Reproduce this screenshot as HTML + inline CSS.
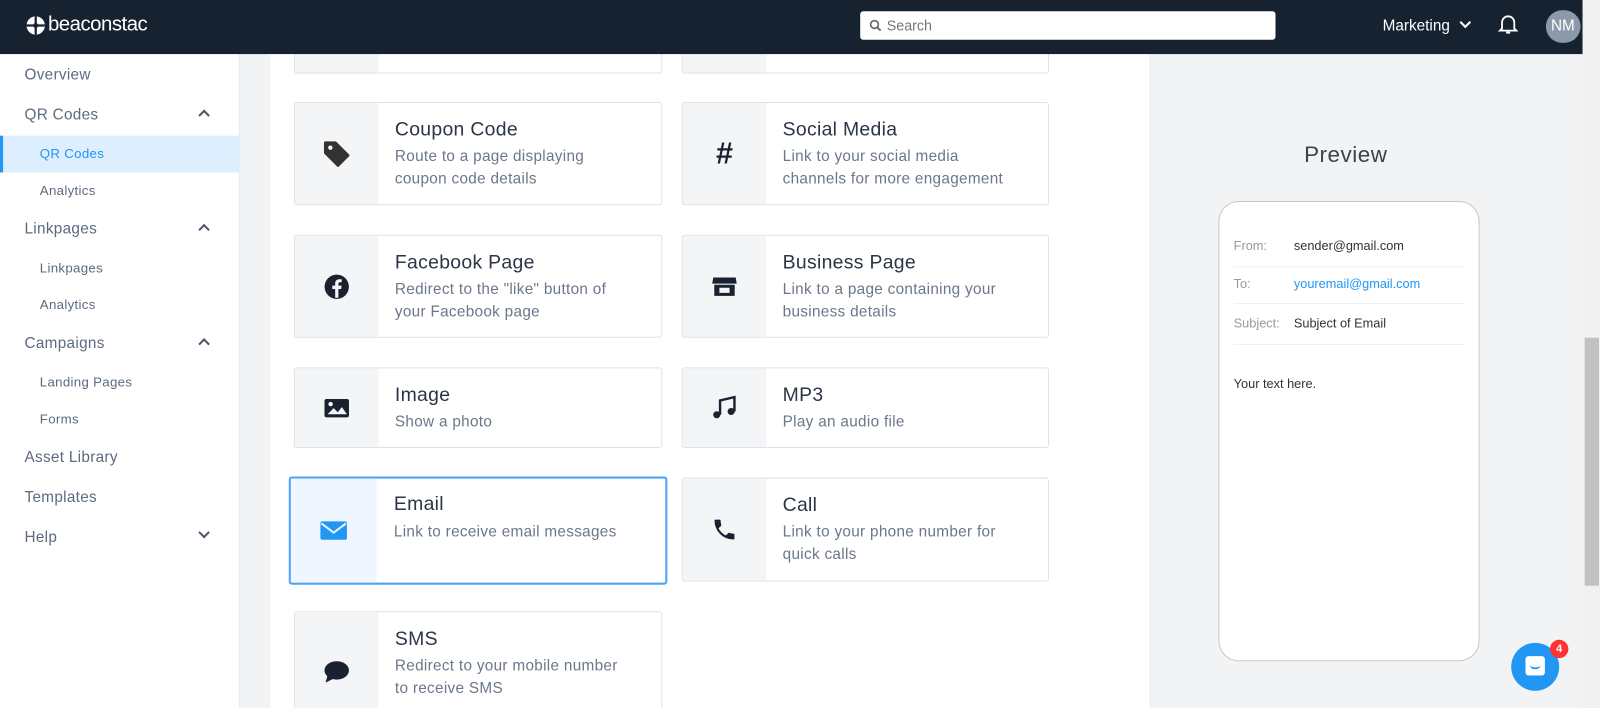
<!DOCTYPE html>
<html><head><style>
*{box-sizing:border-box;margin:0;padding:0}
html,body{width:1600px;height:708px;overflow:hidden}
body{font-family:"Liberation Sans",sans-serif;background:#fff;position:relative}
#w{position:absolute;left:0;top:0;width:1568px;height:694px;transform:scale(1.0204);transform-origin:0 0}
.hdr{position:absolute;left:0;top:0;width:1551px;height:53px;background:#172231;z-index:10}
.side{position:absolute;left:0;top:53px;width:235px;height:655px;background:#fff;border-right:1px solid #e6e8eb}
.strip{position:absolute;left:235px;top:53px;width:30px;height:655px;background:#f2f3f5}
.prev{position:absolute;left:1126px;top:53px;width:425px;height:655px;background:#f2f3f5}
.sb{position:absolute;left:1551px;top:0;width:17px;height:708px;background:#f1f1f1;z-index:11}
.nav{position:absolute;left:24px;font-size:15px;color:#5c6a7e;letter-spacing:0.3px}
.sub{position:absolute;left:39px;font-size:13px;color:#5c6a7e;letter-spacing:0.3px}
.chev{position:absolute;left:196px;width:8px;height:8px;border-left:2.5px solid #4a5768;border-top:2.5px solid #4a5768;transform:rotate(45deg)}
.card{position:absolute;border:1px solid #dfe2e6;border-radius:3px;background:#fff;overflow:hidden}
.card .ic{position:absolute;left:0;top:0;bottom:0;width:82px;background:#f4f5f7;display:flex;align-items:center;justify-content:center}
.card .t{position:absolute;left:98px;top:16px;font-size:19px;color:#2b3545;letter-spacing:0.3px}
.card .d{position:absolute;left:98px;top:42px;font-size:15px;color:#6b778a;line-height:22px;white-space:nowrap;letter-spacing:0.3px}
</style></head><body><div id="w">
<div class="hdr">
  <svg style="position:absolute;left:25px;top:15px" width="20" height="20" viewBox="0 0 20 20"><circle cx="10" cy="10" r="9" fill="#fff"/><path d="M10 10L10 1M10 10L19 10M10 10L10 19M10 10L1 10" stroke="#172231" stroke-width="2.2"/><circle cx="10" cy="10" r="2.5" fill="#172231"/></svg>
  <div style="position:absolute;left:47px;top:13px;color:#fff;font-size:20px;letter-spacing:-0.5px">beaconstac</div>
  <div style="position:absolute;left:843px;top:11px;width:407px;height:28px;background:#fff;border-radius:3px">
    <svg style="position:absolute;left:9px;top:8px" width="12" height="12" viewBox="0 0 12 12"><circle cx="5" cy="5" r="3.8" stroke="#666" stroke-width="1.6" fill="none"/><path d="M8 8l3 3" stroke="#666" stroke-width="1.8"/></svg>
    <span style="position:absolute;left:26px;top:6px;font-size:14px;color:#777">Search</span>
  </div>
  <div style="position:absolute;left:1355px;top:17px;color:#fff;font-size:15px">Marketing</div>
  <div style="position:absolute;left:1432px;top:18px;width:8px;height:8px;border-right:2.5px solid #fff;border-bottom:2.5px solid #fff;transform:rotate(45deg)"></div>
  <svg style="position:absolute;left:1468px;top:13px" width="20" height="22" viewBox="0 0 20 22"><path d="M4 15V9a6 6 0 0 1 12 0v6l2 2H2z" stroke="#fff" stroke-width="1.8" fill="none"/><path d="M8 19h4" stroke="#fff" stroke-width="2"/></svg>
  <div style="position:absolute;left:1515px;top:10px;width:34px;height:32px;border-radius:16px;background:#8a9aab;color:#fff;font-size:15px;line-height:32px;padding-left:5px">NM</div>
</div>
<div class="side">
  <div class="nav" style="top:12px">Overview</div>
  <div class="nav" style="top:51px">QR Codes</div><div class="chev" style="top:56px"></div>
  <div style="position:absolute;left:0;top:80px;width:235px;height:36px;background:#ddeeff;border-left:3px solid #2196f3"></div>
  <div class="sub" style="top:90px;color:#2196f3">QR Codes</div>
  <div class="sub" style="top:126px">Analytics</div>
  <div class="nav" style="top:163px">Linkpages</div><div class="chev" style="top:168px"></div>
  <div class="sub" style="top:202px">Linkpages</div>
  <div class="sub" style="top:238px">Analytics</div>
  <div class="nav" style="top:275px">Campaigns</div><div class="chev" style="top:280px"></div>
  <div class="sub" style="top:314px">Landing Pages</div>
  <div class="sub" style="top:350px">Forms</div>
  <div class="nav" style="top:387px">Asset Library</div>
  <div class="nav" style="top:426px">Templates</div>
  <div class="nav" style="top:465px">Help</div><div class="chev" style="top:465px;transform:rotate(225deg)"></div>
</div>
<div class="strip"></div>
<div class="prev">
  <div style="position:absolute;left:152px;top:86px;font-size:22px;color:#3a4350;letter-spacing:0.5px">Preview</div>
  <div style="position:absolute;left:68px;top:144px;width:256px;height:451px;background:#fff;border:1px solid #c8c8c8;border-radius:20px">
    <div style="position:absolute;left:14px;top:36px;width:226px;font-size:12.5px;color:#333">
      <div style="height:28px;border-bottom:1px solid #eee;position:relative"><span style="color:#999">From:</span><span style="position:absolute;left:59px">sender@gmail.com</span></div>
      <div style="height:36px;border-bottom:1px solid #eee;position:relative;padding-top:9px"><span style="color:#999">To:</span><span style="position:absolute;left:59px;color:#2196f3">youremail@gmail.com</span></div>
      <div style="height:40px;border-bottom:1px solid #eee;position:relative;padding-top:12px"><span style="color:#999">Subject:</span><span style="position:absolute;left:59px">Subject of Email</span></div>
      <div style="margin-top:31px">Your text here.</div>
    </div>
  </div>
  <div style="position:absolute;left:355px;top:577px;width:47px;height:47px;border-radius:50%;background:#2196f3">
    <div style="position:absolute;left:14px;top:13px;width:19px;height:19px;background:#fff;border-radius:3px"></div>
    <div style="position:absolute;left:18px;top:21px;width:11px;height:5px;border-bottom:2px solid #2196f3;border-radius:0 0 6px 6px"></div>
  </div>
  <div style="position:absolute;left:393px;top:574px;width:18px;height:18px;border-radius:50%;background:#f33;color:#fff;font-size:11px;font-weight:bold;text-align:center;line-height:18px">4</div>
</div>
<div class="sb"><div style="position:absolute;left:2px;top:331px;width:14px;height:243px;background:#c1c1c1"></div></div>

<div class="card" style="left:288px;top:40px;width:361px;height:32px"><div class="ic"></div></div>
<div class="card" style="left:668px;top:40px;width:360px;height:32px"><div class="ic"></div></div>

<div class="card" style="left:288px;top:100px;width:361px;height:101px"><div class="ic"><svg width="30" height="30" viewBox="0 0 24 24"><path d="M3 3h8l10 10-8 8L3 11z" fill="#333" stroke="#333" stroke-linejoin="round" stroke-width="2"/><circle cx="7" cy="7" r="1.7" fill="#f4f5f7"/></svg></div><div class="t">Coupon Code</div><div class="d">Route to a page displaying<br>coupon code details</div></div>
<div class="card" style="left:668px;top:100px;width:360px;height:101px"><div class="ic"><span style="font-size:30px;font-weight:bold;color:#1a2230">#</span></div><div class="t">Social Media</div><div class="d">Link to your social media<br>channels for more engagement</div></div>

<div class="card" style="left:288px;top:230px;width:361px;height:101px"><div class="ic"><svg width="26" height="26" viewBox="0 0 24 24"><circle cx="12" cy="12" r="11" fill="#1a2230"/><path d="M13.5 22v-8h2.5l.4-3h-2.9V9.3c0-.8.3-1.4 1.5-1.4h1.5V5.3c-.3 0-1.2-.1-2.2-.1-2.2 0-3.7 1.3-3.7 3.8V11H8v3h2.6v8z" fill="#f4f5f7"/></svg></div><div class="t">Facebook Page</div><div class="d">Redirect to the "like" button of<br>your Facebook page</div></div>
<div class="card" style="left:668px;top:230px;width:360px;height:101px"><div class="ic"><svg width="26" height="24" viewBox="0 0 26 24"><path d="M2 3h22l1 6H1z" fill="#1a2230"/><path d="M3 10h20v11H3z" fill="#1a2230"/><path d="M8 13h10v5H8z" fill="#f4f5f7"/></svg></div><div class="t">Business Page</div><div class="d">Link to a page containing your<br>business details</div></div>

<div class="card" style="left:288px;top:360px;width:361px;height:79px"><div class="ic"><svg width="26" height="22" viewBox="0 0 26 22"><rect x="1" y="2" width="24" height="18" rx="2" fill="#1a2230"/><circle cx="7" cy="7" r="2.2" fill="#f4f5f7"/><path d="M4 17l6-6 4 4 4-5 5 7z" fill="#f4f5f7"/></svg></div><div class="t">Image</div><div class="d">Show a photo</div></div>
<div class="card" style="left:668px;top:360px;width:360px;height:79px"><div class="ic"><svg width="26" height="26" viewBox="0 0 24 24"><path d="M8 18V5l13-3v13" stroke="#1a2230" stroke-width="2.2" fill="none"/><circle cx="5" cy="18" r="3.2" fill="#1a2230"/><circle cx="18" cy="15" r="3.2" fill="#1a2230"/></svg></div><div class="t">MP3</div><div class="d">Play an audio file</div></div>

<div class="card" style="left:283px;top:467px;width:371px;height:106px;border:2px solid #4aa3f5"><div class="ic" style="width:84px;background:#eff6ff"><svg width="28" height="22" viewBox="0 0 28 22"><rect x="1" y="2" width="26" height="18" rx="2" fill="#2196f3"/><path d="M2 4l12 9 12-9" stroke="#eff6ff" stroke-width="2" fill="none"/></svg></div><div class="t" style="left:101px;top:15px">Email</div><div class="d" style="left:101px">Link to receive email messages</div></div>
<div class="card" style="left:668px;top:468px;width:360px;height:102px"><div class="ic"><svg width="26" height="26" viewBox="0 0 24 24"><path d="M6.6 10.8a15 15 0 0 0 6.6 6.6l2.2-2.2c.3-.3.7-.4 1-.2 1.1.4 2.3.6 3.6.6.6 0 1 .4 1 1V20c0 .6-.4 1-1 1A17 17 0 0 1 3 4c0-.6.4-1 1-1h3.5c.6 0 1 .4 1 1 0 1.3.2 2.5.6 3.6.1.3 0 .7-.2 1z" fill="#1a2230"/></svg></div><div class="t">Call</div><div class="d">Link to your phone number for<br>quick calls</div></div>

<div class="card" style="left:288px;top:599px;width:361px;height:120px"><div class="ic"><svg width="26" height="24" viewBox="0 0 26 24"><ellipse cx="13" cy="10" rx="12" ry="9" fill="#1a2230"/><path d="M4 15l-2 7 8-4z" fill="#1a2230"/></svg></div><div class="t">SMS</div><div class="d">Redirect to your mobile number<br>to receive SMS</div></div>
</div></body></html>
